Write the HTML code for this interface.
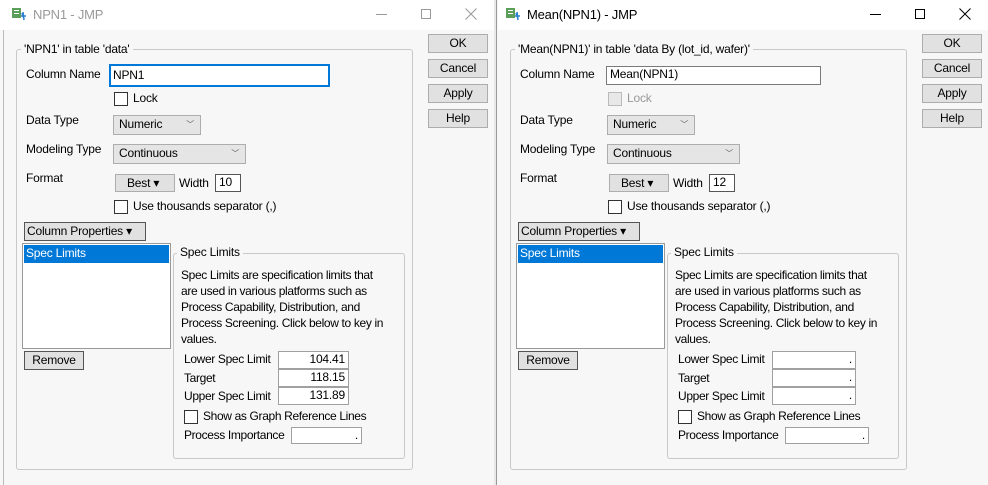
<!DOCTYPE html>
<html><head><meta charset="utf-8"><style>
*{box-sizing:border-box;margin:0;padding:0}
body{width:988px;height:485px;overflow:hidden;background:#f7f7f7;font-family:"Liberation Sans",sans-serif;font-size:12px;color:#000;position:relative;letter-spacing:-0.2px}
.win{position:absolute;top:0;width:494px;height:485px;background:#f7f7f7}
.a{position:absolute;white-space:nowrap}
.tb{position:absolute;left:0;top:0;width:494px;height:30px;background:#fff}
.btn{position:absolute;background:#e1e1e1;border:1px solid #adadad;text-align:center;line-height:16px;font-size:12px}
.grp{position:absolute;border:1px solid #c8c8c8;border-radius:3px}
.leg{position:absolute;background:#f7f7f7;padding:0 3px;line-height:14px;font-size:12px}
.inp{position:absolute;background:#fff;border:1px solid #a0a0a0;line-height:15px;padding:0 3px;font-size:12px}
.cb{position:absolute;width:14px;height:14px;background:#fff;border:1px solid #333}
.sel{position:absolute;background:#e5e5e5;border:1px solid #adadad;line-height:17px;padding-left:5px;font-size:12px}
.sel i{position:absolute;right:6px;top:0;font-style:normal;font-size:8px;color:#555}
.lbl{font-size:12px}
.txt{letter-spacing:-0.35px}
</style></head><body>

<div class="win" style="left:0">
 <div style="position:absolute;left:3px;top:0;width:1px;height:485px;background:#bbb"></div>
 <div class="tb"></div>
 <svg class="a" style="left:12px;top:7px" width="14" height="14"><rect x="0" y="1" width="9" height="10" fill="#5a9e5a"/><rect x="2" y="3" width="5" height="1" fill="#fff"/><rect x="2" y="6" width="5" height="1" fill="#fff"/><path d="M10 6l2 6M9 9l5 0M11 5l1 8" stroke="#2a7fd0" stroke-width="1.5"/></svg>
 <div class="a" style="left:33px;top:7px;font-size:13px;color:#999">NPN1 - JMP</div>
 <div class="a" style="left:376px;top:14px;width:11px;height:1px;background:#999"></div>
 <div class="a" style="left:421px;top:9px;width:10px;height:10px;border:1px solid #999"></div>
 <svg class="a" style="left:465px;top:8px" width="12" height="12"><path d="M0.5 0.5L11.5 11.5M11.5 0.5L0.5 11.5" stroke="#999" stroke-width="1"/></svg>

 <div class="btn" style="left:428px;top:34px;width:60px;height:19px">OK</div>
 <div class="btn" style="left:428px;top:59px;width:60px;height:19px">Cancel</div>
 <div class="btn" style="left:428px;top:84px;width:60px;height:19px">Apply</div>
 <div class="btn" style="left:428px;top:109px;width:60px;height:19px">Help</div>

 <div class="grp" style="left:16px;top:49px;width:397px;height:421px"></div>
 <div class="leg" style="left:21px;top:42px">'NPN1' in table 'data'</div>
 <div class="a lbl" style="left:26px;top:67px">Column Name</div>
 <div class="inp" style="left:109px;top:64px;width:221px;height:23px;border:2px solid #0078d7;line-height:18px;padding-left:2px">NPN1</div>
 <div class="cb" style="left:114px;top:92px"></div>
 <div class="a lbl" style="left:133px;top:91px">Lock</div>
 <div class="a lbl" style="left:26px;top:113px">Data Type</div>
 <div class="sel" style="left:113px;top:115px;width:88px;height:20px">Numeric<i>﹀</i></div>
 <div class="a lbl" style="left:26px;top:142px">Modeling Type</div>
 <div class="sel" style="left:113px;top:144px;width:133px;height:20px">Continuous<i>﹀</i></div>
 <div class="a lbl" style="left:26px;top:171px">Format</div>
 <div class="btn" style="left:115px;top:174px;width:60px;height:18px;text-align:left;padding-left:11px">Best ▾</div>
 <div class="a lbl" style="left:179px;top:176px">Width</div>
 <div class="inp" style="left:215px;top:174px;width:26px;height:18px;border-color:#555">10</div>
 <div class="cb" style="left:114px;top:200px"></div>
 <div class="a lbl" style="left:133px;top:199px">Use thousands separator (,)</div>
 <div class="btn" style="left:24px;top:222px;width:122px;height:19px;border-color:#555;text-align:left;padding-left:2px">Column Properties ▾</div>
 <div class="a" style="left:22px;top:243px;width:149px;height:106px;background:#fff;border:1px solid #999"></div>
 <div class="a" style="left:24px;top:245px;width:145px;height:18px;background:#0078d7;color:#fff;padding-left:2px;line-height:17px;font-size:12px">Spec Limits</div>
 <div class="btn" style="left:24px;top:351px;width:60px;height:19px;border-color:#555">Remove</div>

 <div class="grp" style="left:173px;top:253px;width:232px;height:206px"></div>
 <div class="leg" style="left:177px;top:245px">Spec Limits</div>
 <div class="a lbl txt" style="left:181px;top:267px;line-height:16px">Spec Limits are specification limits that<br>are used in various platforms such as<br>Process Capability, Distribution, and<br>Process Screening. Click below to key in<br>values.</div>
 <div class="a lbl txt" style="left:184px;top:352px">Lower Spec Limit</div>
 <div class="a lbl txt" style="left:184px;top:371px">Target</div>
 <div class="a lbl txt" style="left:184px;top:389px">Upper Spec Limit</div>
 <div class="inp" style="left:278px;top:351px;width:71px;height:18px;text-align:right">104.41</div>
 <div class="inp" style="left:278px;top:369px;width:71px;height:18px;text-align:right">118.15</div>
 <div class="inp" style="left:278px;top:387px;width:71px;height:18px;text-align:right">131.89</div>
 <div class="cb" style="left:184px;top:410px"></div>
 <div class="a lbl txt" style="left:203px;top:409px">Show as Graph Reference Lines</div>
 <div class="a lbl txt" style="left:184px;top:428px">Process Importance</div>
 <div class="inp" style="left:291px;top:427px;width:71px;height:17px;text-align:right">.</div>
</div>

<div class="win" style="left:494px">
 <div style="position:absolute;left:0;top:0;width:3px;height:485px;background:#e8e8e8;border-right:1px solid #999"></div>
 <div class="tb" style="left:4px;width:490px"></div>
 <svg class="a" style="left:12px;top:7px" width="14" height="14"><rect x="0" y="1" width="9" height="10" fill="#5a9e5a"/><rect x="2" y="3" width="5" height="1" fill="#fff"/><rect x="2" y="6" width="5" height="1" fill="#fff"/><path d="M10 6l2 6M9 9l5 0M11 5l1 8" stroke="#2a7fd0" stroke-width="1.5"/></svg>
 <div class="a" style="left:33px;top:7px;font-size:13px;color:#000">Mean(NPN1) - JMP</div>
 <div class="a" style="left:376px;top:14px;width:11px;height:1px;background:#000"></div>
 <div class="a" style="left:421px;top:9px;width:10px;height:10px;border:1px solid #000"></div>
 <svg class="a" style="left:465px;top:8px" width="12" height="12"><path d="M0.5 0.5L11.5 11.5M11.5 0.5L0.5 11.5" stroke="#000" stroke-width="1"/></svg>

 <div class="btn" style="left:428px;top:34px;width:60px;height:19px">OK</div>
 <div class="btn" style="left:428px;top:59px;width:60px;height:19px">Cancel</div>
 <div class="btn" style="left:428px;top:84px;width:60px;height:19px">Apply</div>
 <div class="btn" style="left:428px;top:109px;width:60px;height:19px">Help</div>

 <div class="grp" style="left:16px;top:49px;width:397px;height:421px"></div>
 <div class="leg" style="left:21px;top:42px">'Mean(NPN1)' in table 'data By (lot_id, wafer)'</div>
 <div class="a lbl" style="left:26px;top:67px">Column Name</div>
 <div class="inp" style="left:112px;top:66px;width:215px;height:19px;border-color:#7a7a7a">Mean(NPN1)</div>
 <div class="cb" style="left:114px;top:92px;background:#e8e8e8;border-color:#bbb"></div>
 <div class="a lbl" style="left:133px;top:91px;color:#999">Lock</div>
 <div class="a lbl" style="left:26px;top:113px">Data Type</div>
 <div class="sel" style="left:113px;top:115px;width:88px;height:20px">Numeric<i>﹀</i></div>
 <div class="a lbl" style="left:26px;top:142px">Modeling Type</div>
 <div class="sel" style="left:113px;top:144px;width:133px;height:20px">Continuous<i>﹀</i></div>
 <div class="a lbl" style="left:26px;top:171px">Format</div>
 <div class="btn" style="left:115px;top:174px;width:60px;height:18px;text-align:left;padding-left:11px">Best ▾</div>
 <div class="a lbl" style="left:179px;top:176px">Width</div>
 <div class="inp" style="left:215px;top:174px;width:26px;height:18px;border-color:#555">12</div>
 <div class="cb" style="left:114px;top:200px"></div>
 <div class="a lbl" style="left:133px;top:199px">Use thousands separator (,)</div>
 <div class="btn" style="left:24px;top:222px;width:122px;height:19px;border-color:#555;text-align:left;padding-left:2px">Column Properties ▾</div>
 <div class="a" style="left:22px;top:243px;width:149px;height:106px;background:#fff;border:1px solid #999"></div>
 <div class="a" style="left:24px;top:245px;width:145px;height:18px;background:#0078d7;color:#fff;padding-left:2px;line-height:17px;font-size:12px">Spec Limits</div>
 <div class="btn" style="left:24px;top:351px;width:60px;height:19px;border-color:#555">Remove</div>

 <div class="grp" style="left:173px;top:253px;width:232px;height:206px"></div>
 <div class="leg" style="left:177px;top:245px">Spec Limits</div>
 <div class="a lbl txt" style="left:181px;top:267px;line-height:16px">Spec Limits are specification limits that<br>are used in various platforms such as<br>Process Capability, Distribution, and<br>Process Screening. Click below to key in<br>values.</div>
 <div class="a lbl txt" style="left:184px;top:352px">Lower Spec Limit</div>
 <div class="a lbl txt" style="left:184px;top:371px">Target</div>
 <div class="a lbl txt" style="left:184px;top:389px">Upper Spec Limit</div>
 <div class="inp" style="left:278px;top:351px;width:84px;height:18px;text-align:right">.</div>
 <div class="inp" style="left:278px;top:369px;width:84px;height:18px;text-align:right">.</div>
 <div class="inp" style="left:278px;top:387px;width:84px;height:18px;text-align:right">.</div>
 <div class="cb" style="left:184px;top:410px"></div>
 <div class="a lbl txt" style="left:203px;top:409px">Show as Graph Reference Lines</div>
 <div class="a lbl txt" style="left:184px;top:428px">Process Importance</div>
 <div class="inp" style="left:291px;top:427px;width:84px;height:17px;text-align:right">.</div>
</div>
</body></html>
